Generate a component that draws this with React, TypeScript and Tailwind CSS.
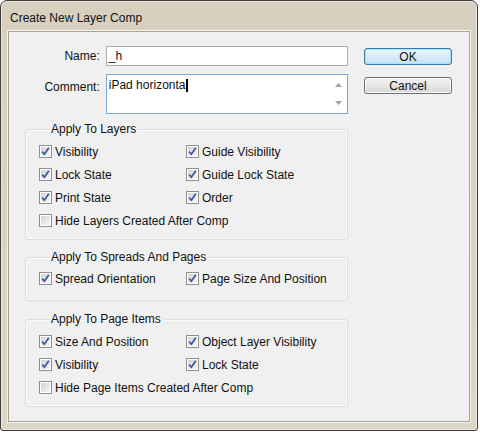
import type { ReactNode } from 'react'

const font = { fontFamily: '"Liberation Sans", Arial, sans-serif' }

function Check({ checked, label }: { checked: boolean; label: string }) {
  return (
    <div className="flex h-[23px] items-center">
      <span className="flex h-[13px] w-[13px] shrink-0 items-center justify-center border border-[#8e8f8f] bg-white">
        <span className="flex h-[9px] w-[9px] items-center justify-center bg-gradient-to-br from-[#d4d4d4] to-[#f6f6f6]">
          {checked && (
            <svg width="9" height="9" viewBox="0 0 9 9" className="overflow-visible">
              <path d="M1.2 4.6 L3.4 7.2 L7.8 0.8" fill="none" stroke="#3b54a0" strokeWidth="1.7" />
            </svg>
          )}
        </span>
      </span>
      <span className="ml-[3px] whitespace-nowrap text-[12px] leading-none text-[#111]">{label}</span>
    </div>
  )
}

function Group({ title, children, className }: { title: string; children: ReactNode; className?: string }) {
  return (
    <fieldset className={`rounded-[3px] border border-[#d5dfe5] px-[13px] shadow-[inset_0_0_0_1px_#fbfbfb] ${className ?? ''}`}>
      <legend className="ml-[10px] px-[2px] text-[12px] leading-[14px] text-[#111]">{title}</legend>
      {children}
    </fieldset>
  )
}

function Button({ label, primary }: { label: string; primary?: boolean }) {
  return (
    <button
      className={`flex h-[17px] w-[88px] items-center justify-center rounded-[3px] border text-[12px] leading-none text-[#111] ${
        primary
          ? 'border-[#3d7bad] bg-gradient-to-b from-[#ecf6fc] to-[#c5e1f2] shadow-[inset_0_0_0_1px_#a7e4f8]'
          : 'border-[#707070] bg-gradient-to-b from-[#f3f3f3] to-[#d8d8d8] shadow-[inset_0_0_0_1px_#fcfcfc]'
      }`}
    >
      {label}
    </button>
  )
}

export default function App() {
  return (
    <div className="h-[434px] w-[480px] bg-white" style={font}>
      <div className="flex h-[431px] w-[478px] flex-col rounded-t-[7px] rounded-b-[3px] border border-[#3f3f3f] bg-gradient-to-b from-[#d7d0bf] to-[#dcd6c7] shadow-[inset_0_0_0_1px_#ebe6da]">
        {/* title bar */}
        <div className="flex h-[30px] shrink-0 items-center pl-[9px] pt-[3px]">
          <span className="text-[12px] text-[#111]">Create New Layer Comp</span>
        </div>

        {/* client area */}
        <div className="mx-[7px] mb-[8px] flex flex-1 border border-[#a9a393] bg-[#f0f0f0] pl-[16px] pt-[14px] shadow-[0_0_0_1px_#f6f3ec]">
          <div className="flex w-[323px] flex-col">
            <div className="flex items-center">
              <span className="w-[77px] pr-[2px] text-right text-[12px] text-[#111]">Name:</span>
              <div className="ml-[4px] flex h-[20px] w-[243px] items-center border border-[#abadb3] bg-white pl-[2px] text-[12px] text-[#111]">
                _h
              </div>
            </div>
            <div className="mt-[8px] flex items-start">
              <span className="mt-[4px] w-[77px] pr-[2px] text-right text-[12px] text-[#111]">Comment:</span>
              <div className="ml-[4px] flex h-[40px] w-[243px] border border-[#7ea6d2] bg-white">
                <div className="flex flex-1 items-start pl-[2px] pt-[3px] text-[12px] leading-[14px] text-[#111]">
                  iPad horizonta
                  <span className="ml-[1px] mt-[1px] inline-block h-[13px] w-[1.5px] bg-black" />
                </div>
                <div className="flex w-[17px] flex-col items-center justify-between py-[8px]">
                  <svg width="7" height="4" viewBox="0 0 7 4">
                    <path d="M0 4 L3.5 0 L7 4 Z" fill="#a3a3a3" />
                  </svg>
                  <svg width="7" height="4" viewBox="0 0 7 4">
                    <path d="M0 0 L3.5 4 L7 0 Z" fill="#a3a3a3" />
                  </svg>
                </div>
              </div>
            </div>

            <Group title="Apply To Layers" className="mt-[8px] pb-[7px]">
              <div className="grid grid-cols-[147px_1fr] pt-[4px]">
                <Check checked label="Visibility" />
                <Check checked label="Guide Visibility" />
                <Check checked label="Lock State" />
                <Check checked label="Guide Lock State" />
                <Check checked label="Print State" />
                <Check checked label="Order" />
                <div className="col-span-2">
                  <Check checked={false} label="Hide Layers Created After Comp" />
                </div>
              </div>
            </Group>

            <Group title="Apply To Spreads And Pages" className="mt-[10px] pb-[10px]">
              <div className="grid grid-cols-[147px_1fr] pt-[3px]">
                <Check checked label="Spread Orientation" />
                <Check checked label="Page Size And Position" />
              </div>
            </Group>

            <Group title="Apply To Page Items" className="mt-[11px] pb-[7px]">
              <div className="grid grid-cols-[147px_1fr] pt-[4px]">
                <Check checked label="Size And Position" />
                <Check checked label="Object Layer Visibility" />
                <Check checked label="Visibility" />
                <Check checked label="Lock State" />
                <div className="col-span-2">
                  <Check checked={false} label="Hide Page Items Created After Comp" />
                </div>
              </div>
            </Group>
          </div>

          <div className="ml-[16px] flex flex-col gap-[12px] pt-[2px]">
            <Button label="OK" primary />
            <Button label="Cancel" />
          </div>
        </div>
      </div>
    </div>
  )
}
